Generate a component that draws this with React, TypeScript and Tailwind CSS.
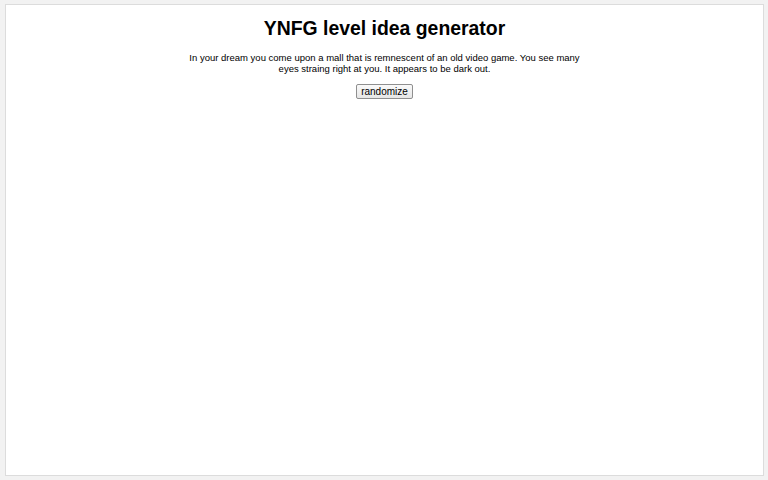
import React from "react";

export default function App() {
  return (
    <div className="min-h-[480px] w-full bg-[#f2f2f2] pt-[4px] pl-[5px] pr-[4px] pb-[4px]" style={{ fontFamily: '"Liberation Sans", Arial, sans-serif' }}>
      <div className="h-[472px] w-[759px] border border-[#dcdcdc] bg-white flex flex-col items-center text-black">
        <h1 className="mt-[11px] text-[19.4px] font-bold leading-[24px]">YNFG level idea generator</h1>
        <p className="mt-[12px] w-[400px] text-center text-[9.5px] leading-[11px]">
          In your dream you come upon a mall that is remnescent of an old video game. You see many eyes straing right at you. It appears to be dark out.
        </p>
        <button className="mt-[10px] h-[15px] px-[4px] text-[10px] leading-[12px] border border-[#8f8f8f] rounded-[2px] bg-gradient-to-b from-[#fafafa] to-[#e6e6e6]">
          randomize
        </button>
      </div>
    </div>
  );
}
